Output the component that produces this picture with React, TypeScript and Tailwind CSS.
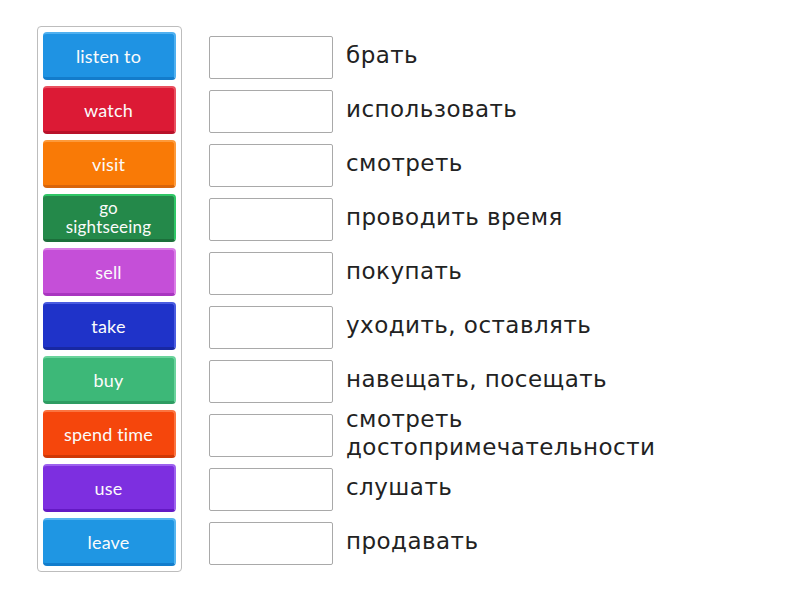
const words = [
  { label: "listen to", cls: "bg-[#1f93e3] border-t-[#4fb0f0] border-r-[#4fb0f0] border-b-[#137ccb]" },
  { label: "watch", cls: "bg-[#dc1a35] border-t-[#e9505f] border-r-[#e9505f] border-b-[#b8112a]" },
  { label: "visit", cls: "bg-[#f97a06] border-t-[#fd9a3a] border-r-[#fd9a3a] border-b-[#d8650a]" },
  { label: "go sightseeing", cls: "bg-[#24894a] border-t-[#2fc766] border-r-[#2fc766] border-b-[#1c6e3a]" },
  { label: "sell", cls: "bg-[#c54fd8] border-t-[#da7de6] border-r-[#da7de6] border-b-[#a935c0]" },
  { label: "take", cls: "bg-[#1f33c9] border-t-[#4a5ce0] border-r-[#4a5ce0] border-b-[#1828a3]" },
  { label: "buy", cls: "bg-[#3db878] border-t-[#6ad39c] border-r-[#6ad39c] border-b-[#2e9c62]" },
  { label: "spend time", cls: "bg-[#f5460c] border-t-[#fb7440] border-r-[#fb7440] border-b-[#cf3806]" },
  { label: "use", cls: "bg-[#7d2fe0] border-t-[#9d62ee] border-r-[#9d62ee] border-b-[#6419c4]" },
  { label: "leave", cls: "bg-[#1f96e3] border-t-[#55b5f0] border-r-[#55b5f0] border-b-[#127dcc]" },
];

const meanings = [
  "брать",
  "использовать",
  "смотреть",
  "проводить время",
  "покупать",
  "уходить, оставлять",
  "навещать, посещать",
  "смотреть достопримечательности",
  "слушать",
  "продавать",
];

export default function App() {
  return (
    <div className="w-[800px] h-[600px] bg-white flex items-start">
      {/* word tiles */}
      <div className="ml-[37px] mt-[26px] border border-[#bdbdbd] rounded-[4px] p-[5px] flex flex-col gap-[6px]">
        {words.map((w) => (
          <div
            key={w.label}
            className={`w-[133px] h-[48px] rounded-[4px] border-t-2 border-r-2 border-b-[3px] border-l-0 flex items-center justify-center text-center text-[#fbfbfb] text-[18px] leading-[18px] tracking-[0.01em] px-1 ${w.cls}`}
            style={{ fontFamily: "Lato, 'Noto Sans', sans-serif" }}
          >
            {w.label === "go sightseeing" ? (
              <span className="flex flex-col items-center text-[17px] leading-[20px]">
                <span>go</span>
                <span className="-mt-[1px]">sightseeing</span>
              </span>
            ) : (
              w.label
            )}
          </div>
        ))}
      </div>

      {/* answer slots */}
      <div className="ml-[27px] mt-[30px] flex flex-col">
        {meanings.map((m) => (
          <div key={m} className="h-[54px] flex items-center">
            <div className="w-[124px] h-[43px] border border-[#a9a9a9] rounded-[2px] bg-white shrink-0" />
            <div
              className="ml-[13px] w-[400px] pb-[5px] text-[23px] leading-[28px] tracking-[0.02em] text-[#222222]"
              style={{ fontFamily: "'DejaVu Sans', 'Noto Sans', sans-serif" }}
            >
              {m === "смотреть достопримечательности" ? (
                <>
                  смотреть
                  <br />
                  достопримечательности
                </>
              ) : (
                m
              )}
            </div>
          </div>
        ))}
      </div>
    </div>
  );
}
